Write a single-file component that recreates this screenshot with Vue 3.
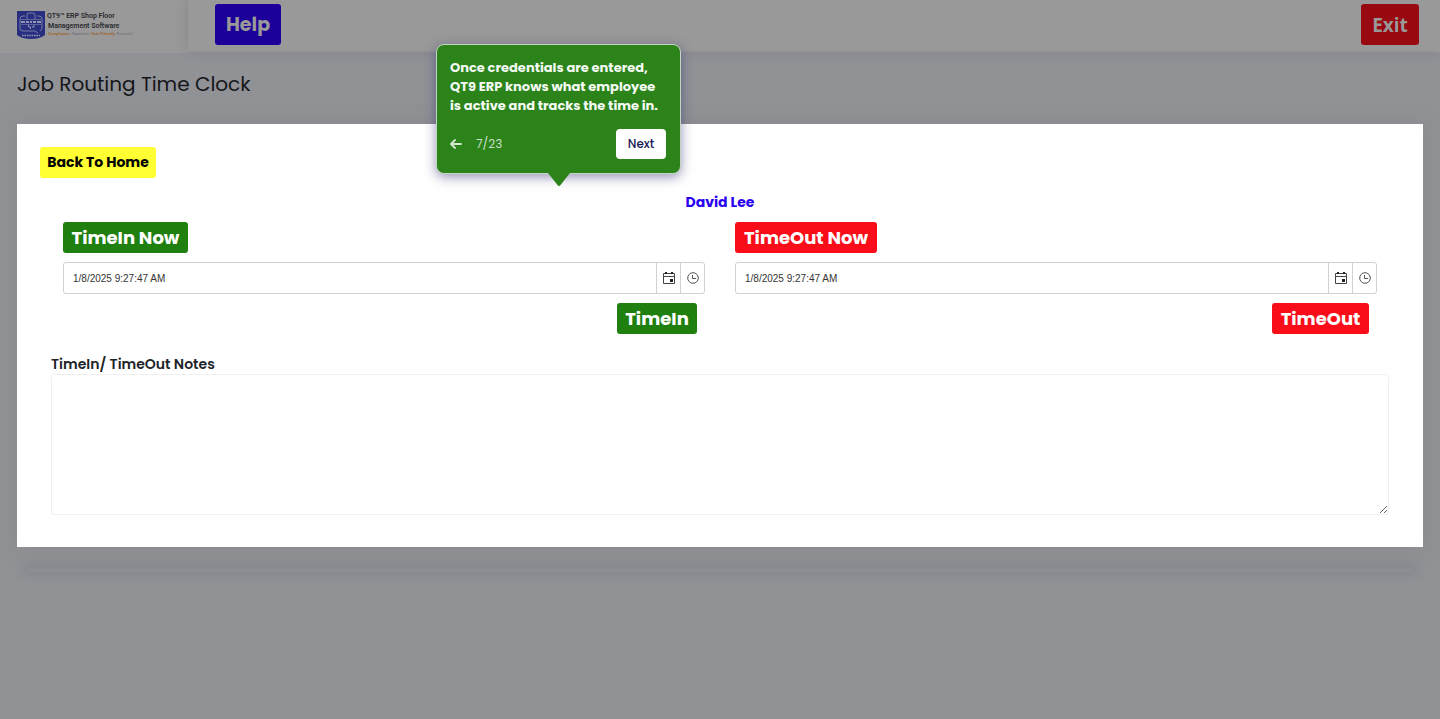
<script setup>
import { ref, reactive } from 'vue'

const clocks = reactive([
  { id: 'in', now: 'TimeIn Now', action: 'TimeIn', value: '1/8/2025 9:27:47 AM' },
  { id: 'out', now: 'TimeOut Now', action: 'TimeOut', value: '1/8/2025 9:27:47 AM' },
])
const notes = ref('')
const step = ref(7)
</script>

<template>
  <div class="page">
    <header class="header">
      <a class="brand" href="#" aria-label="QT9 ERP Shop Floor Management Software">
        <svg class="logo" viewBox="0 0 28 28" aria-hidden="true">
          <path d="M0 0H28V24Q23 28 14 28T0 24Z" fill="#282f80" />
          <path d="M10 8V4Q10 2 12 2H16Q18 2 18 4V8M8 5H6Q3 5 3 8V17Q3 20 6 20H18L21 22M20 5H22Q25 5 25 8V17Q25 19 23 20" fill="none" stroke="#777ca3" />
          <path d="M4 8.500H24M4 13.500H24" stroke="#5d639a" />
          <path d="M4 11H8M9 11H12M13 11H15M16 11H19M20 11H24" stroke="#9295b0" stroke-width="2" />
          <path d="M11.500 14V16H13.500V18M17 14V16H15" fill="none" stroke="#9295b0" />
          <path d="M5 24.500H23" stroke="#9295b0" stroke-width="1.500" stroke-dasharray="1.600 .8" />
        </svg>
        <span class="brand-text">
          <span class="brand-name">QT9™ ERP Shop Floor</span>
          <span class="brand-name indent">Management Software</span>
          <span class="tagline"><b>Compliance.</b> Paperless. <b>User Friendly.</b> Powerful.</span>
        </span>
      </a>
      <nav class="nav">
        <button class="btn help" type="button">Help</button>
        <button class="btn exit" type="button">Exit</button>
      </nav>
    </header>

    <main class="main">
      <h1>Job Routing Time Clock</h1>
      <section class="card">
        <button class="btn back" type="button">Back To Home</button>
        <p class="employee">David Lee</p>
        <div class="clocks">
          <div v-for="c in clocks" :key="c.id" class="clock" :class="c.id">
            <button class="btn now" type="button">{{ c.now }}</button>
            <div class="picker">
              <input v-model="c.value" type="text" :aria-label="c.action + ' date and time'">
              <button type="button" aria-label="Open calendar">
                <svg viewBox="0 0 12 12" width="12" height="12" aria-hidden="true">
                  <path d="M.5 1.500H11.500V11.500H.5ZM.5 4.500H11.500" fill="none" stroke="#444" />
                  <path d="M2 0H4V2H2ZM8 0H10V2H8ZM7 7H10V10H7Z" fill="#222" />
                </svg>
              </button>
              <button type="button" aria-label="Open time list">
                <svg viewBox="0 0 12 12" width="12" height="12" aria-hidden="true">
                  <circle cx="6" cy="6" r="5.300" fill="none" stroke="#555" />
                  <path d="M5.500 3V6.500H9" fill="none" stroke="#555" />
                </svg>
              </button>
            </div>
            <button class="btn action" type="button">{{ c.action }}</button>
          </div>
        </div>
        <div class="notes">
          <label for="notes">TimeIn/ TimeOut Notes</label>
          <textarea id="notes" v-model="notes"></textarea>
        </div>
      </section>
      <div class="footer-bar"></div>
    </main>

    <aside class="tip" role="dialog" aria-label="Guide">
      <p>Once credentials are entered,<br>QT9 ERP knows what employee<br>is active and tracks the time in.</p>
      <div class="tip-row">
        <button class="prev" type="button" aria-label="Previous step" @click="step--">
          <svg viewBox="0 0 12 10" width="12" height="10" aria-hidden="true">
            <path d="M11 5H1.500M5 1L1 5L5 9" fill="none" stroke="#d5e6d1" stroke-width="1.800" stroke-linecap="round" stroke-linejoin="round" />
          </svg>
        </button>
        <span class="count">{{ step }}/23</span>
        <button class="next" type="button" @click="step++">Next</button>
      </div>
      <svg class="arrow" viewBox="0 0 22 14" width="22" height="14" aria-hidden="true">
        <path d="M0 0H22L12.500 12Q11 14 9.500 12Z" fill="#2b831a" />
      </svg>
    </aside>
  </div>
</template>

<style>
body {
  background: #919296;
}
</style>

<style scoped>
* {
  box-sizing: border-box;
}
.page {
  position: relative;
  min-height: 100vh;
  background: #919296;
  font-family: Poppins, Inter, sans-serif;
  color: #212529;
}
button {
  border: 0;
  padding: 0;
  font-family: inherit;
  cursor: pointer;
}
.header {
  display: flex;
  align-items: flex-start;
  height: 53px;
  background: #999;
}
.brand {
  display: flex;
  flex: 0 0 188px;
  gap: 2px;
  padding: 11px 0 0 17px;
  text-decoration: none;
}
.logo {
  flex: none;
  width: 28px;
  height: 28px;
}
.brand-text {
  display: flex;
  flex-direction: column;
  font-family: Roboto, sans-serif;
  white-space: nowrap;
}
.brand-name {
  color: #29292d;
  font-size: 7px;
  font-weight: 600;
  line-height: 10px;
}
.indent {
  padding-left: 1px;
}
.tagline {
  padding-left: 1px;
  color: #6b6b76;
  font-size: 4px;
  line-height: 5px;
}
.tagline b {
  color: #a0642e;
  font-weight: 600;
}
.nav {
  display: flex;
  flex: 1;
  justify-content: space-between;
  height: 51px;
  padding: 4px 21px 0 27px;
  background: #999;
  box-shadow: 0 0 12px rgba(70, 70, 100, 0.22);
}
.btn {
  border-radius: 3px;
  font-weight: 700;
}
.help,
.exit {
  height: 41px;
  color: #999;
  font-size: 19px;
}
.help {
  width: 66px;
  background: #1c0099;
}
.exit {
  width: 58px;
  background: #990911;
  font-family: "Open Sans", sans-serif;
}
.main {
  padding: 0 17px;
}
h1 {
  margin: 0;
  padding: 16px 0 25px;
  color: #14161a;
  font-size: 20px;
  font-weight: 400;
  line-height: 30px;
}
.card {
  padding: 23px 34px 32px;
  background: #fff;
  box-shadow: 0 0 24px rgba(80, 80, 80, 0.15);
}
.back {
  display: block;
  width: 116px;
  height: 31px;
  margin-left: -11px;
  background: #ff3;
  color: #000;
  font-size: 14px;
}
.employee {
  margin: 14px 0 10px;
  color: #2a00f0;
  font-size: 14px;
  font-weight: 700;
  line-height: 20px;
  text-align: center;
}
.clocks {
  display: grid;
  grid-template-columns: 1fr 1fr;
  gap: 30px;
  padding: 0 12px;
}
.clock {
  display: flex;
  flex-direction: column;
  align-items: flex-start;
  gap: 9px;
}
.now,
.action {
  height: 31px;
  color: #fff;
  font-size: 18px;
}
.in .btn {
  background: #20800f;
}
.out .btn {
  background: #f80d18;
}
.in .now {
  width: 125px;
}
.out .now {
  width: 142px;
}
.action {
  align-self: flex-end;
  margin-right: 8px;
}
.in .action {
  width: 80px;
}
.out .action {
  width: 97px;
}
.picker {
  display: flex;
  width: 100%;
  height: 32px;
  border: 1px solid #d2d2d2;
  border-radius: 3px;
  background: #fff;
}
.picker input {
  flex: 1;
  min-width: 0;
  padding: 0 9px;
  border: 0;
  background: none;
  color: #333;
  font-family: "Liberation Sans", Arial, sans-serif;
  font-size: 10px;
}
.picker button {
  display: grid;
  flex: 0 0 24px;
  place-items: center;
  border-left: 1px solid #d2d2d2;
  background: none;
}
.notes {
  display: flex;
  flex-direction: column;
  margin-top: 20px;
}
.notes label {
  font-size: 14px;
  font-weight: 600;
  line-height: 20px;
}
.notes textarea {
  height: 141px;
  border: 1px solid #f0f0f0;
  border-radius: 3px;
  outline: 0;
  background: #fff;
  resize: vertical;
}
.footer-bar {
  height: 4px;
  margin: 21px 8px 0;
  border-radius: 4px;
  background: #8d8e92;
  box-shadow: 0 0 10px 3px rgba(80, 80, 85, 0.16);
}
.tip {
  position: absolute;
  top: 44px;
  left: 436px;
  width: 245px;
  padding: 13px 14px 14px 13px;
  border: 1px solid #c3d5c3;
  border-radius: 8px;
  background: #2b831a;
  box-shadow: 0 3px 12px rgba(40, 40, 110, 0.5);
}
.tip p {
  margin: 0;
  color: #f5faf4;
  font-size: 13px;
  font-weight: 700;
  line-height: 19px;
  white-space: nowrap;
}
.tip-row {
  display: flex;
  align-items: center;
  margin-top: 14px;
}
.prev {
  display: grid;
  place-items: center;
  background: none;
}
.count {
  margin-left: 14px;
  color: #c8dec4;
  font-size: 12px;
}
.next {
  width: 50px;
  height: 30px;
  margin-left: auto;
  border-radius: 4px;
  background: #fff;
  color: #1c1a55;
  font-size: 12px;
  font-weight: 500;
}
.arrow {
  position: absolute;
  top: 100%;
  left: 50%;
  margin-left: -11px;
}
</style>
